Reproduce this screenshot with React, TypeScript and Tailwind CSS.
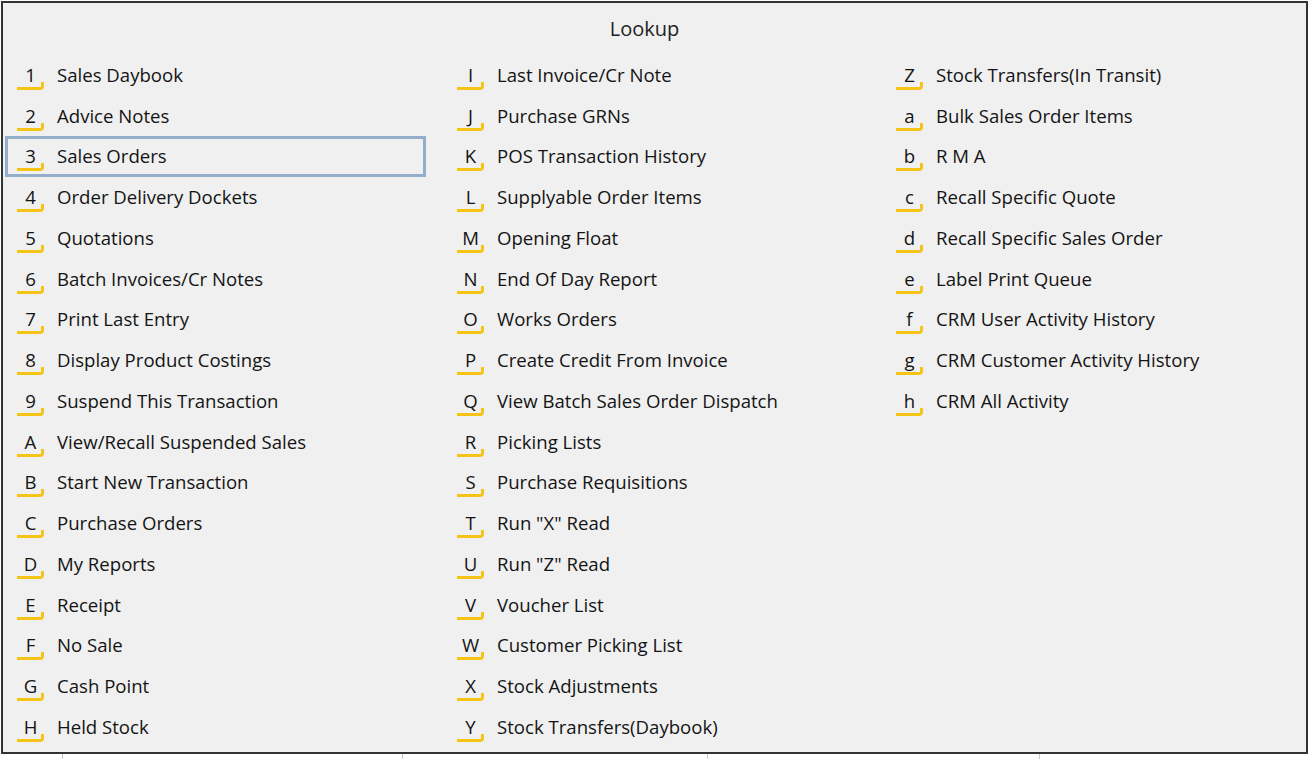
import React from "react";

type Entry = { k: string; label: string };

const columns: Entry[][] = [
  [
    { k: "1", label: "Sales Daybook" },
    { k: "2", label: "Advice Notes" },
    { k: "3", label: "Sales Orders" },
    { k: "4", label: "Order Delivery Dockets" },
    { k: "5", label: "Quotations" },
    { k: "6", label: "Batch Invoices/Cr Notes" },
    { k: "7", label: "Print Last Entry" },
    { k: "8", label: "Display Product Costings" },
    { k: "9", label: "Suspend This Transaction" },
    { k: "A", label: "View/Recall Suspended Sales" },
    { k: "B", label: "Start New Transaction" },
    { k: "C", label: "Purchase Orders" },
    { k: "D", label: "My Reports" },
    { k: "E", label: "Receipt" },
    { k: "F", label: "No Sale" },
    { k: "G", label: "Cash Point" },
    { k: "H", label: "Held Stock" },
  ],
  [
    { k: "I", label: "Last Invoice/Cr Note" },
    { k: "J", label: "Purchase GRNs" },
    { k: "K", label: "POS Transaction History" },
    { k: "L", label: "Supplyable Order Items" },
    { k: "M", label: "Opening Float" },
    { k: "N", label: "End Of Day Report" },
    { k: "O", label: "Works Orders" },
    { k: "P", label: "Create Credit From Invoice" },
    { k: "Q", label: "View Batch Sales Order Dispatch" },
    { k: "R", label: "Picking Lists" },
    { k: "S", label: "Purchase Requisitions" },
    { k: "T", label: 'Run "X" Read' },
    { k: "U", label: 'Run "Z" Read' },
    { k: "V", label: "Voucher List" },
    { k: "W", label: "Customer Picking List" },
    { k: "X", label: "Stock Adjustments" },
    { k: "Y", label: "Stock Transfers(Daybook)" },
  ],
  [
    { k: "Z", label: "Stock Transfers(In Transit)" },
    { k: "a", label: "Bulk Sales Order Items" },
    { k: "b", label: "R M A" },
    { k: "c", label: "Recall Specific Quote" },
    { k: "d", label: "Recall Specific Sales Order" },
    { k: "e", label: "Label Print Queue" },
    { k: "f", label: "CRM User Activity History" },
    { k: "g", label: "CRM Customer Activity History" },
    { k: "h", label: "CRM All Activity" },
  ],
];

const selected = "3";

function KeyBadge({ k }: { k: string }) {
  return (
    <span className="relative inline-block w-[27px] shrink-0 text-center leading-[24px]">
      {k}
      {/* yellow hotkey underline with little upturn */}
      <span className="pointer-events-none absolute left-0 right-0 bottom-[-3px] h-[8px] rounded-br-[4px] border-b-[3px] border-r-[3px] border-[#f6c417]" />
    </span>
  );
}

function Item({ entry }: { entry: Entry }) {
  const active = entry.k === selected;
  return (
    <div
      className={
        active
          ? "flex h-[40.75px] w-[421px] items-center border-[3px] border-[#93aecb] pl-[9px]"
          : "flex h-[40.75px] w-[421px] items-center border-[3px] border-transparent pl-[9px]"
      }
    >
      <KeyBadge k={entry.k} />
      <span className="ml-[13px] whitespace-nowrap leading-[24px]">{entry.label}</span>
    </div>
  );
}

export default function App() {
  return (
    <div
      className="relative h-[759px] w-[1312px] overflow-hidden bg-white text-[18.6px] text-[#141414]"
      style={{ fontFamily: '"Open Sans", "Noto Sans", sans-serif' }}
    >
      <div className="ml-[1px] mt-[1px] h-[753px] w-[1307px] border-2 border-[#333] bg-[#f0f0f0]">
        <div className="flex h-[51.5px] items-center justify-center pr-[20px] text-[20px] text-[#222]">
          Lookup
        </div>
        <div className="grid grid-cols-[440px_439px_1fr] pl-[2px]">
          {columns.map((col, i) => (
            <div key={i} className="flex flex-col">
              {col.map((e) => (
                <Item key={e.k} entry={e} />
              ))}
            </div>
          ))}
        </div>
      </div>
      {/* sheet grid ticks showing under the dialog */}
      <div className="flex h-[5px]">
        <div className="w-[62px]" />
        <div className="w-[340px] border-l border-[#c8c8c8]" />
        <div className="w-[305px] border-l border-[#c8c8c8]" />
        <div className="w-[332px] border-l border-[#c8c8c8]" />
        <div className="flex-1 border-l border-[#c8c8c8]" />
      </div>
    </div>
  );
}
